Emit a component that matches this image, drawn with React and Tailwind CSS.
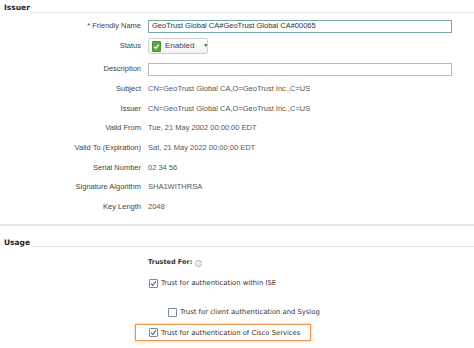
import React from "react";

const sans = { fontFamily: '"Liberation Sans", Arial, sans-serif' };
const tahoma = { fontFamily: '"DejaVu Sans", Verdana, sans-serif' };

function Check({ on }) {
  return (
    <span className="w-[9px] h-[9px] border border-[#7b8a99] bg-white rounded-[1px] flex items-center justify-center shrink-0">
      {on && (
        <svg width="7" height="7" viewBox="0 0 8 8">
          <path d="M1.2 4.2 L3.2 6.2 L6.8 1.6" fill="none" stroke="#2f6fb5" strokeWidth="1.4" />
        </svg>
      )}
    </span>
  );
}

function Row({ label, children, h = "h-[19.6px]" }) {
  return (
    <div className={`flex items-center ${h}`}>
      <div className="w-[141px] shrink-0 text-right text-[#444]">{label}</div>
      <div className="ml-[7px] flex-1 flex items-center text-[#555]">{children}</div>
    </div>
  );
}

export default function App() {
  const data = [
    ["Subject", "CN=GeoTrust Global CA,O=GeoTrust Inc.,C=US"],
    ["Issuer", "CN=GeoTrust Global CA,O=GeoTrust Inc.,C=US"],
    ["Valid From", "Tue, 21 May 2002 00:00:00 EDT"],
    ["Valid To (Expiration)", "Sat, 21 May 2022 00:00:00 EDT"],
    ["Serial Number", "02 34 56"],
    ["Signature Algorithm", "SHA1WITHRSA"],
    ["Key Length", "2048"],
  ];

  return (
    <div className="w-[474px] h-[348px] bg-white overflow-hidden flex flex-col">
      {/* Issuer header */}
      <div className="flex items-end h-[13px] pl-[4px]">
        <span className="text-[7.5px] font-bold text-[#222] leading-none pb-[2px]" style={tahoma}>Issuer</span>
        <div className="flex-1 border-b border-[#e3e3e3] ml-[1px]" />
      </div>

      <div className="pt-[3px] text-[7.5px]" style={sans}>
        <Row label="* Friendly Name" h="h-[20px]">
          <div className="w-[304px] h-[13px] border border-[#78aaac] px-[3px] flex items-center text-[7.5px] text-[#333]">
            GeoTrust Global CA#GeoTrust Global CA#00065
          </div>
        </Row>
        <Row label="Status" h="h-[20px]">
          <div className="w-[60px] h-[16px] border border-[#cfcfcf] rounded-[2px] bg-gradient-to-b from-white to-[#f3f3f3] flex items-center pl-[3px] gap-[4px]">
            <span className="w-[11px] h-[11px] rounded-[1px] bg-[#5aaa3a] border border-[#4b9330] flex items-center justify-center">
              <svg width="7" height="7" viewBox="0 0 8 8">
                <path d="M1.3 4.2 L3.2 6 L6.8 1.8" fill="none" stroke="white" strokeWidth="1.5" />
              </svg>
            </span>
            <span className="text-[8px] text-[#444]">Enabled</span>
            <span className="ml-[5px] text-[5px] text-[#444]">▼</span>
          </div>
        </Row>
        <div className="h-[3px]" />
        <Row label="Description" h="h-[20px]">
          <div className="w-[304px] h-[13px] border border-[#b9b9b9]" />
        </Row>
        {data.map(([l, v]) => (
          <Row key={l} label={l}>
            <span className="text-[7.5px]">{v}</span>
          </Row>
        ))}
      </div>

      {/* Separator */}
      <div className="mt-[8px] h-[2px] bg-[#e6e6e6]" />

      {/* Usage header */}
      <div className="flex items-end h-[21px] pl-[4px]">
        <span className="text-[7.5px] font-bold text-[#222] leading-none pb-[1px]" style={tahoma}>Usage</span>
        <div className="flex-1 border-b border-[#e3e3e3] ml-[1px]" />
      </div>

      <div className="text-[6.8px] text-[#333]" style={tahoma}>
        <div className="h-[16px] flex items-center pl-[148px] mt-[8px] gap-[3px]">
          <span className="font-bold text-[6.5px]">Trusted For:</span>
          <span className="w-[7px] h-[7px] rounded-full border border-[#aaa] text-[5px] text-[#888] flex items-center justify-center leading-none">i</span>
        </div>
        <div className="h-[16px] mt-[4px] flex items-center pl-[149px] gap-[3px]">
          <Check on />
          <span>Trust for authentication within ISE</span>
        </div>
        <div className="h-[16px] mt-[13px] flex items-center pl-[168px] gap-[3px]">
          <Check />
          <span>Trust for client authentication and Syslog</span>
        </div>
        <div className="ml-[135px] mt-[4px] w-[176px] h-[17px] border border-[#ec9550] shadow-[0_0_3px_#f2b987] flex items-center pl-[13px] gap-[3px]">
          <Check on />
          <span>Trust for authentication of Cisco Services</span>
        </div>
      </div>
    </div>
  );
}
